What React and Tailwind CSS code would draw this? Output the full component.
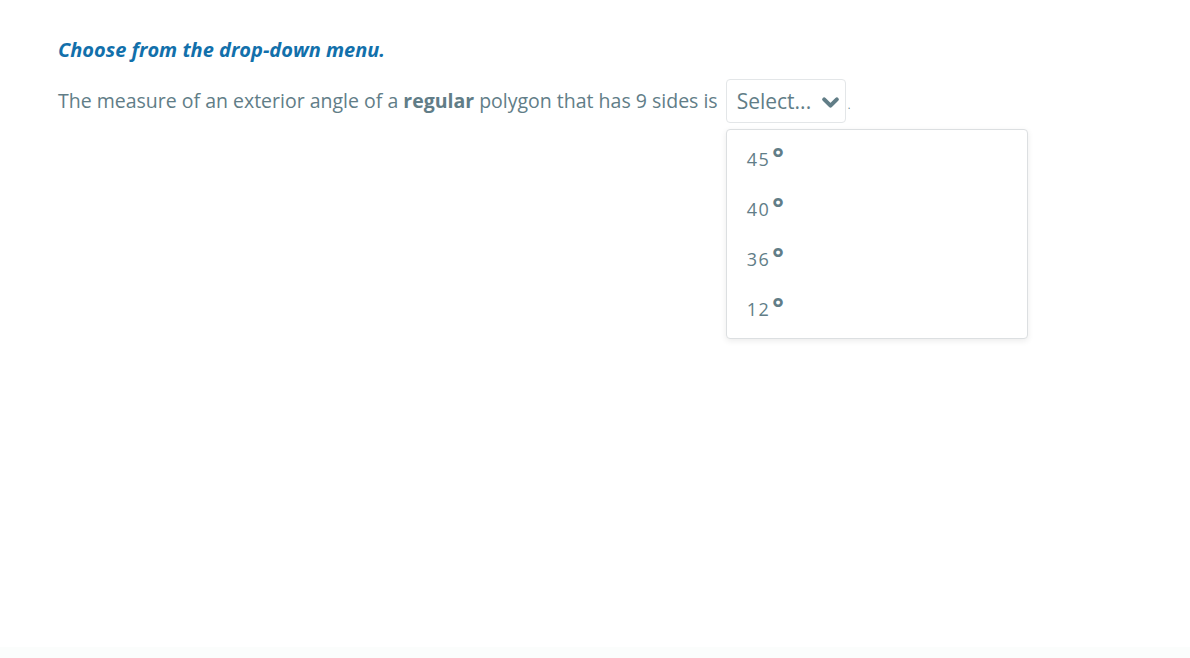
import React from "react";

const options = ["45", "40", "36", "12"];

// ── Dropdown item ────────────────────────────────────────────────────────────
const Option = ({ value }) => (
  <div className="h-[50px] flex items-center px-[20px] text-[18px] tracking-[1.5px] text-[#617d87]">
    {value}
    <span className="ml-[2px] -translate-y-[3px] font-bold text-[27px] leading-none">°</span>
  </div>
);

// ── Page ─────────────────────────────────────────────────────────────────────
const App = () => {
  return (
    <div className="min-h-[658px] bg-white flex flex-col font-['Open_Sans','Liberation_Sans',sans-serif]">
      <main className="flex-1 pl-[58px] pt-[36px]">
        <h2 className="text-[20px] font-bold italic text-[#1270ab] leading-[28px]">
          Choose from the drop-down menu.
        </h2>

        <div className="mt-[15px] flex items-center text-[19.5px] text-[#617d87]">
          <span>
            The measure of an exterior angle of a <b className="font-bold">regular</b> polygon that has 9 sides is
          </span>
          <div className="relative ml-[8px]">
            <button className="h-[44px] w-[120px] flex items-center justify-between pl-[10px] pr-[5px] border border-[#e3e6e8] rounded-[4px] bg-white text-[21px] text-[#617d87]">
              <span className="mt-[2px]">Select...</span>
              <svg width="19" height="19" viewBox="0 0 18 18" className="mt-[3px]">
                <path d="M3 6 L9 12 L15 6" fill="none" stroke="#617d87" strokeWidth="3.8" strokeLinecap="round" strokeLinejoin="round" />
              </svg>
            </button>
            <div className="absolute left-0 top-[50px] w-[302px] py-[4px] bg-white border border-[#dcdfe1] rounded-[4px] shadow-[0_2px_6px_rgba(0,0,0,0.08)] z-10">
              {options.map((o) => <Option key={o} value={o} />)}
            </div>
          </div>
          <span className="ml-[2px] self-end mb-[10px] text-[10px]">.</span>
        </div>
      </main>
      <div className="h-[11px] bg-[#fbfdfc]" />
    </div>
  );
};

export default App;
